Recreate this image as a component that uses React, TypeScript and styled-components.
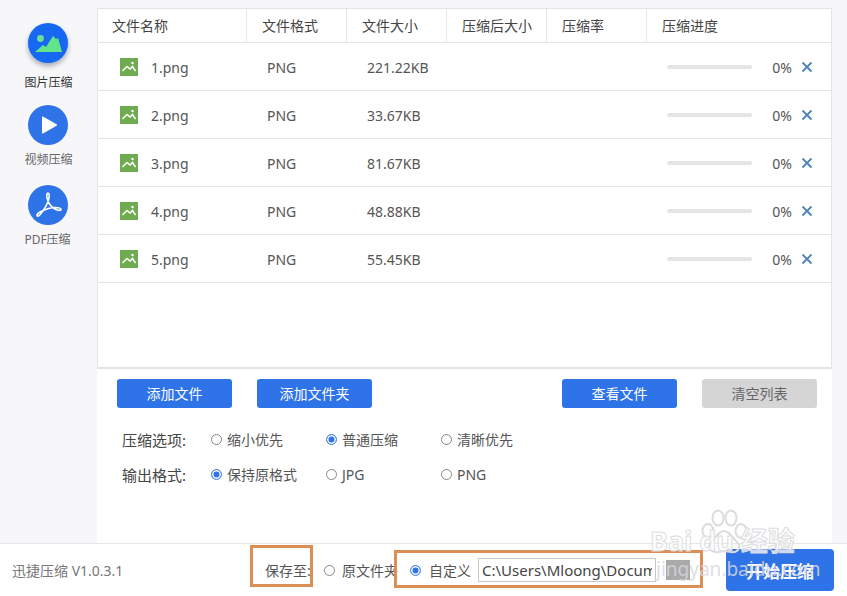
import React from "react";
import styled, { createGlobalStyle } from "styled-components";

const files = [
  { name: "1.png", size: "221.22KB" },
  { name: "2.png", size: "33.67KB" },
  { name: "3.png", size: "81.67KB" },
  { name: "4.png", size: "48.88KB" },
  { name: "5.png", size: "55.45KB" },
];

const columns = ["文件名称", "文件格式", "文件大小", "压缩后大小", "压缩率", "压缩进度"];

export default function App() {
  return (
    <>
      <GlobalStyle />
      <Page>
        <Main>
          <Sidebar>
            <NavItem $gap={12} $after={14} $active>
              <NavCircle $bg="#1668f2" $shadow>
                <svg width="40" height="40" viewBox="0 0 40 40">
                  <circle cx="12.5" cy="15.5" r="3.4" fill="#6fdc9a" />
                  <path d="M7 29 L15 22 L18 24 L25 13 L28 16 L30 15 L34 29 Z" fill="#62e58a" />
                </svg>
              </NavCircle>
              <NavLabel $active>图片压缩</NavLabel>
            </NavItem>
            <NavItem $gap={7} $after={17}>
              <NavCircle $bg="#2f73e8">
                <svg width="40" height="40" viewBox="0 0 40 40">
                  <path d="M15 12.5 L28 20 L15 27.5 Z" fill="#fff" stroke="#fff" strokeWidth="2" strokeLinejoin="round" />
                </svg>
              </NavCircle>
              <NavLabel>视频压缩</NavLabel>
            </NavItem>
            <NavItem $gap={7} $shift={-1}>
              <NavCircle $bg="#2f73e8">
                <svg width="40" height="40" viewBox="0 0 40 40" fill="none">
                  <path
                    d="M9.5 31 C8 30 10 28 13 26.5 C17 24.5 22 22.5 27 22.5 C30 22.5 33 23 33 24.5 C33 26 29 25.5 26 23.5 C23 21.5 20 17 19 13 C18.5 10 19 8 20 8 C21.5 8 21.5 11 20.5 15 C19 20 15 26 12.5 29 C11.5 30.5 10.5 31.5 9.5 31 Z"
                    stroke="#fff"
                    strokeWidth="1.6"
                    strokeLinejoin="round"
                  />
                </svg>
              </NavCircle>
              <NavLabel>PDF压缩</NavLabel>
            </NavItem>
          </Sidebar>

          <Content>
            <Panel>
              <FileTable>
                <HeaderRow>
                  {columns.map((col) => (
                    <HeaderCell key={col}>{col}</HeaderCell>
                  ))}
                </HeaderRow>
                {files.map((file) => (
                  <Row key={file.name}>
                    <NameCell>
                      <svg width="18" height="18" viewBox="0 0 18 18">
                        <rect width="18" height="18" fill="#6fab50" />
                        <circle cx="12.5" cy="5" r="1.3" fill="#fff" />
                        <path d="M2.5 13 L7 8.5 L10 11 L12.5 8.5 L15.5 13" fill="none" stroke="#fff" strokeWidth="1.5" />
                      </svg>
                      <FileName>{file.name}</FileName>
                    </NameCell>
                    <Cell>PNG</Cell>
                    <Cell>{file.size}</Cell>
                    <Cell />
                    <Cell />
                    <ProgressCell>
                      <Track />
                      <Percent>0%</Percent>
                      <svg width="12" height="12" viewBox="0 0 12 12">
                        <path d="M1.5 1.5 L10.5 10.5 M10.5 1.5 L1.5 10.5" stroke="#4a83bf" strokeWidth="1.8" />
                      </svg>
                    </ProgressCell>
                  </Row>
                ))}
              </FileTable>

              <Actions>
                <ActionButton>添加文件</ActionButton>
                <ActionButton>添加文件夹</ActionButton>
                <Spacer />
                <ActionButton>查看文件</ActionButton>
                <ActionButton $muted>清空列表</ActionButton>
              </Actions>

              <OptionRow $top={20}>
                <OptionName>压缩选项:</OptionName>
                <Option>
                  <Radio />
                  缩小优先
                </Option>
                <Option>
                  <Radio $checked />
                  普通压缩
                </Option>
                <Option>
                  <Radio />
                  清晰优先
                </Option>
              </OptionRow>
              <OptionRow $top={13}>
                <OptionName>输出格式:</OptionName>
                <Option>
                  <Radio $checked />
                  保持原格式
                </Option>
                <Option>
                  <Radio />
                  JPG
                </Option>
                <Option>
                  <Radio />
                  PNG
                </Option>
              </OptionRow>
            </Panel>
          </Content>
        </Main>

        <BottomBar>
          <Version>迅捷压缩 V1.0.3.1</Version>
          <SaveLabel>保存至:</SaveLabel>
          <SaveOption $width={86} $gap={7}>
            <Radio />
            原文件夹
          </SaveOption>
          <SaveOption $width={68} $gap={8}>
            <Radio $checked />
            自定义
          </SaveOption>
          <PathInput readOnly value="C:\Users\Mloong\Documents" />
          <BrowseButton />
          <StartButton>开始压缩</StartButton>
        </BottomBar>

        <Highlight $x={250} $y={545} $w={63} $h={42} />
        <Highlight $x={394} $y={550} $w={309} $h={38} />

        <Watermark>
          <svg width="50" height="50" viewBox="0 0 50 50" fill="none" stroke="#dcdce0" strokeWidth="2">
            <ellipse cx="10" cy="26" rx="5.5" ry="7" />
            <ellipse cx="20" cy="13" rx="5.5" ry="7.5" />
            <ellipse cx="33" cy="13" rx="5.5" ry="7.5" />
            <ellipse cx="43" cy="26" rx="5.5" ry="7" />
            <path d="M26 26 C20 26 18 33 13 37 C9 42 13 48 20 47 C24 46 29 46 33 47 C40 48 44 42 39 37 C34 33 32 26 26 26 Z" />
          </svg>
          <WatermarkTitle>Bai du 经验</WatermarkTitle>
          <WatermarkUrl>jingyan.baidu.com</WatermarkUrl>
        </Watermark>
      </Page>
    </>
  );
}

const GlobalStyle = createGlobalStyle`
  html, body {
    margin: 0;
    padding: 0;
    background: #fff;
  }
  * {
    box-sizing: border-box;
  }
  body {
    font-family: "Noto Sans", "Noto Sans CJK SC", sans-serif;
    color: #444;
  }
`;

const Page = styled.div`
  position: relative;
  display: flex;
  flex-direction: column;
  width: 847px;
  height: 596px;
  overflow: hidden;
`;

const Main = styled.div`
  display: flex;
  height: 543px;
  background: #f7f7fa;
`;

const Sidebar = styled.nav`
  display: flex;
  flex-direction: column;
  align-items: center;
  width: 97px;
  padding-top: 23px;
`;

const NavItem = styled.div<{ $gap: number; $after?: number; $active?: boolean; $shift?: number }>`
  display: flex;
  flex-direction: column;
  align-items: center;
  gap: ${(p) => p.$gap}px;
  margin-left: ${(p) => (p.$shift ?? 0) * 2}px;
  margin-bottom: ${(p) => p.$after ?? 0}px;
`;

const NavCircle = styled.div<{ $bg: string; $shadow?: boolean }>`
  width: 40px;
  height: 40px;
  border-radius: 50%;
  background: ${(p) => p.$bg};
  box-shadow: ${(p) => (p.$shadow ? "0 3px 5px rgba(40, 50, 80, 0.4)" : "none")};
`;

const NavLabel = styled.span<{ $active?: boolean }>`
  font-size: 12px;
  line-height: 16px;
  color: ${(p) => (p.$active ? "#333" : "#666")};
`;

const Content = styled.div`
  width: 750px;
  padding: 8px 15px 0 0;
`;

const Panel = styled.div`
  height: 100%;
  background: #fff;
`;

const FileTable = styled.div`
  height: 361px;
  background: #fff;
  border: 1px solid #e4e4e6;
  border-bottom-width: 2px;
`;

const tableGrid = "149px 100px 100px 100px 100px 184px";

const HeaderRow = styled.div`
  display: grid;
  grid-template-columns: ${tableGrid};
  height: 34px;
  border-bottom: 1px solid #e4e4e6;
`;

const HeaderCell = styled.div`
  padding-left: 15px;
  font-size: 14px;
  line-height: 33px;
  color: #444;
  border-right: 1px solid #e8e8ea;

  &:first-child {
    padding-left: 14px;
  }

  &:last-child {
    border-right: none;
  }
`;

const Row = styled.div`
  display: grid;
  grid-template-columns: ${tableGrid};
  align-items: center;
  height: 48px;
  border-bottom: 1px solid #e4e4e6;
  font-size: 14px;
  color: #555;
`;

const NameCell = styled.div`
  display: flex;
  align-items: center;
  gap: 13px;
  padding-left: 22px;
`;

const FileName = styled.span`
  padding-top: 2px;
`;

const Cell = styled.div`
  padding: 2px 0 0 20px;
`;

const ProgressCell = styled.div`
  display: flex;
  align-items: center;
  padding-left: 20px;
`;

const Track = styled.div`
  width: 85px;
  height: 4px;
  border-radius: 2px;
  background: #e5e5e7;
`;

const Percent = styled.span`
  width: 40px;
  padding-top: 2px;
  text-align: right;
  margin-right: 9px;
`;

const Actions = styled.div`
  display: flex;
  gap: 25px;
  padding: 10px 15px 0 20px;
`;

const Spacer = styled.div`
  flex: 1;
`;

const ActionButton = styled.button<{ $muted?: boolean }>`
  width: 115px;
  height: 29px;
  padding: 0 0 2px;
  border: none;
  border-radius: 3px;
  font-family: inherit;
  font-size: 14px;
  color: ${(p) => (p.$muted ? "#666" : "#fff")};
  background: ${(p) => (p.$muted ? "#d5d5d6" : "#2f73e8")};
`;

const OptionRow = styled.div<{ $top: number }>`
  display: flex;
  align-items: center;
  height: 22px;
  margin-top: ${(p) => p.$top}px;
  padding-left: 25px;
`;

const OptionName = styled.span`
  width: 89px;
  font-size: 15px;
  color: #444;
`;

const Option = styled.label`
  display: flex;
  align-items: center;
  gap: 5px;
  width: 115px;
  font-size: 14px;
  color: #555;
`;

const Radio = styled.span<{ $checked?: boolean }>`
  flex: none;
  width: 11px;
  height: 11px;
  border-radius: 50%;
  border: 1px solid ${(p) => (p.$checked ? "#4f88e6" : "#888")};
  background: ${(p) => (p.$checked ? "#2f73e8" : "#fff")};
  box-shadow: ${(p) => (p.$checked ? "inset 0 0 0 1.5px #fff" : "none")};
`;

const BottomBar = styled.div`
  display: flex;
  align-items: center;
  height: 53px;
  padding-left: 12px;
  background: #fff;
  border-top: 1px solid #e6e6e8;
`;

const Version = styled.span`
  width: 253px;
  font-size: 14px;
  color: #777;
`;

const SaveLabel = styled.span`
  width: 59px;
  font-size: 14px;
  color: #555;
`;

const SaveOption = styled.label<{ $width: number; $gap: number }>`
  display: flex;
  align-items: center;
  gap: ${(p) => p.$gap}px;
  width: ${(p) => p.$width}px;
  font-size: 14px;
  color: #555;
`;

const PathInput = styled.input`
  width: 178px;
  height: 24px;
  padding: 0 3px;
  border: 1px solid #c8c8c8;
  font-family: inherit;
  font-size: 15px;
  color: #444;
  outline: none;
`;

const BrowseButton = styled.div`
  width: 24px;
  height: 20px;
  margin-left: 10px;
  background: #aaa;
`;

const StartButton = styled.button`
  width: 108px;
  height: 42px;
  margin-left: 36px;
  padding: 0;
  border: none;
  border-radius: 4px;
  font-family: inherit;
  font-size: 17px;
  font-weight: 700;
  color: #fff;
  background: #2f73e8;
`;

const Highlight = styled.div<{ $x: number; $y: number; $w: number; $h: number }>`
  position: absolute;
  left: ${(p) => p.$x}px;
  top: ${(p) => p.$y}px;
  width: ${(p) => p.$w}px;
  height: ${(p) => p.$h}px;
  border: 3px solid #dc8f55;
  pointer-events: none;
`;

const Watermark = styled.div`
  position: absolute;
  left: 650px;
  top: 504px;
  width: 170px;
  height: 80px;
  pointer-events: none;

  svg {
    position: absolute;
    left: 48px;
    top: 1px;
  }
`;

const WatermarkTitle = styled.span`
  position: absolute;
  left: 0;
  top: 16px;
  font-size: 27px;
  font-weight: 700;
  white-space: nowrap;
  color: rgba(255, 255, 255, 0.75);
  -webkit-text-stroke: 1px #dcdce0;
`;

const WatermarkUrl = styled.span`
  position: absolute;
  left: 6px;
  top: 52px;
  font-size: 19px;
  white-space: nowrap;
  color: rgba(215, 215, 222, 0.85);
`;
